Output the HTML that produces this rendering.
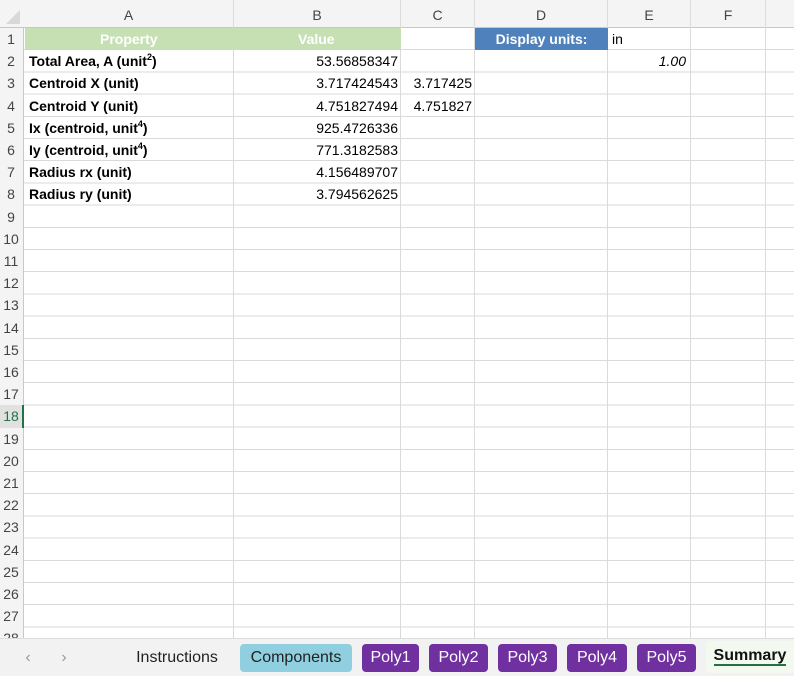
<!DOCTYPE html>
<html><head><meta charset="utf-8"><style>
*{margin:0;padding:0;box-sizing:border-box}
body{width:794px;height:682px;overflow:hidden;background:#fff;font-family:"Liberation Sans",Calibri,sans-serif;position:relative}
.abs{position:absolute}
#grid{left:24px;top:28px;width:770px;height:610px;
background:
linear-gradient(90deg,transparent 209px,#dadada 209px,#dadada 210px,transparent 210px,transparent 376px,#dadada 376px,#dadada 377px,transparent 377px,transparent 450px,#dadada 450px,#dadada 451px,transparent 451px,transparent 583px,#dadada 583px,#dadada 584px,transparent 584px,transparent 666px,#dadada 666px,#dadada 667px,transparent 667px,transparent 741px,#dadada 741px,#dadada 742px,transparent 742px),
repeating-linear-gradient(180deg,transparent 0,transparent 21.2px,#dadada 21.2px,#dadada 22.2px);}
#colh{left:0;top:0;width:794px;height:28px;background:#f4f4f4;border-bottom:1px solid #c8c8c8}
#rowh{left:0;top:28px;width:24px;height:610px;background:#f4f4f4;border-right:1px solid #c8c8c8}
.ch{position:absolute;top:0;height:28px;line-height:30px;text-align:center;font-size:14px;color:#444;border-right:1px solid #dcdcdc}
.rn{position:absolute;left:0;width:22px;height:22.2px;line-height:23px;text-align:center;font-size:14px;color:#444}
.c{position:absolute;height:21px;line-height:22px;font-size:14px;color:#000;white-space:nowrap}
.c sup{font-size:9px;vertical-align:6px;line-height:0}
.b{font-weight:bold}
.r{text-align:right}
#tabs{left:0;top:638px;width:794px;height:38px;background:#f2f2f2;border-top:1px solid #ddd}
.t{position:absolute;top:5px;height:28px;line-height:28px;text-align:center;font-size:16px;border-radius:4px}
.p{background:#7030a0;color:#fff}
</style></head><body>
<div class="abs" id="grid"></div>
<div class="abs" id="colh">
<div class="ch" style="left:24px;width:210px">A</div>
<div class="ch" style="left:234px;width:167px">B</div>
<div class="ch" style="left:401px;width:74px">C</div>
<div class="ch" style="left:475px;width:133px">D</div>
<div class="ch" style="left:608px;width:83px">E</div>
<div class="ch" style="left:691px;width:75px">F</div>
<div style="position:absolute;left:6px;top:10px;width:0;height:0;border-left:14px solid transparent;border-bottom:14px solid #d8d8d8"></div>
</div>
<div class="abs" id="rowh">
<div class="rn" style="top:0">1</div><div class="rn" style="top:22.2px">2</div><div class="rn" style="top:44.4px">3</div><div class="rn" style="top:66.6px">4</div><div class="rn" style="top:88.8px">5</div><div class="rn" style="top:111px">6</div><div class="rn" style="top:133.2px">7</div><div class="rn" style="top:155.4px">8</div><div class="rn" style="top:177.6px">9</div><div class="rn" style="top:199.8px">10</div><div class="rn" style="top:222px">11</div><div class="rn" style="top:244.2px">12</div><div class="rn" style="top:266.4px">13</div><div class="rn" style="top:288.6px">14</div><div class="rn" style="top:310.8px">15</div><div class="rn" style="top:333px">16</div><div class="rn" style="top:355.2px">17</div><div class="rn" style="top:377.4px;color:#217346;background:#e1e1e1;border-right:2px solid #217346;width:24px">18</div><div class="rn" style="top:399.6px">19</div><div class="rn" style="top:421.8px">20</div><div class="rn" style="top:444px">21</div><div class="rn" style="top:466.2px">22</div><div class="rn" style="top:488.4px">23</div><div class="rn" style="top:510.6px">24</div><div class="rn" style="top:532.8px">25</div><div class="rn" style="top:555px">26</div><div class="rn" style="top:577.2px">27</div><div class="rn" style="top:599.4px">28</div>
</div>
<div class="c b" style="left:25px;top:28px;width:376px;background:#c6e0b4;color:#fff;height:22px"><span style="position:absolute;left:75px">Property</span><span style="position:absolute;left:273px">Value</span></div>
<div class="c b" style="left:475px;top:28px;width:133px;background:#4f81bd;color:#fff;height:22px;text-align:center">Display units:</div>
<div class="c" style="left:612px;top:28px">in</div>
<div class="c r" style="left:608px;top:50.2px;width:78px;font-style:italic">1.00</div>
<div class="c b" style="left:29px;top:50.2px">Total Area, A (unit<sup>2</sup>)</div>
<div class="c b" style="left:29px;top:72.4px">Centroid X (unit)</div>
<div class="c b" style="left:29px;top:94.6px">Centroid Y (unit)</div>
<div class="c b" style="left:29px;top:116.8px">Ix (centroid, unit<sup>4</sup>)</div>
<div class="c b" style="left:29px;top:139px">Iy (centroid, unit<sup>4</sup>)</div>
<div class="c b" style="left:29px;top:161.2px">Radius rx (unit)</div>
<div class="c b" style="left:29px;top:183.4px">Radius ry (unit)</div>
<div class="c r" style="left:234px;top:50.2px;width:164px">53.56858347</div>
<div class="c r" style="left:234px;top:72.4px;width:164px">3.717424543</div>
<div class="c r" style="left:234px;top:94.6px;width:164px">4.751827494</div>
<div class="c r" style="left:234px;top:116.8px;width:164px">925.4726336</div>
<div class="c r" style="left:234px;top:139px;width:164px">771.3182583</div>
<div class="c r" style="left:234px;top:161.2px;width:164px">4.156489707</div>
<div class="c r" style="left:234px;top:183.4px;width:164px">3.794562625</div>
<div class="c r" style="left:401px;top:72.4px;width:71px">3.717425</div>
<div class="c r" style="left:401px;top:94.6px;width:71px">4.751827</div>
<div class="abs" id="tabs">
<div class="t" style="left:18px;width:20px;color:#999">‹</div>
<div class="t" style="left:54px;width:20px;color:#999">›</div>
<div class="t" style="left:130px;width:94px;color:#222">Instructions</div>
<div class="t" style="left:240px;width:112px;background:#8fcfdf;color:#222">Components</div>
<div class="t p" style="left:362px;width:57px">Poly1</div>
<div class="t p" style="left:429px;width:59px">Poly2</div>
<div class="t p" style="left:498px;width:59px">Poly3</div>
<div class="t p" style="left:567px;width:60px">Poly4</div>
<div class="t p" style="left:637px;width:59px">Poly5</div>
<div class="t b" style="left:706px;width:88px;background:#f3f9ef;color:#111;top:2px;height:32px;line-height:30px;border-radius:4px 0 0 4px"><span style="border-bottom:2px solid #217346">Summary</span></div>
</div>
</body></html>
